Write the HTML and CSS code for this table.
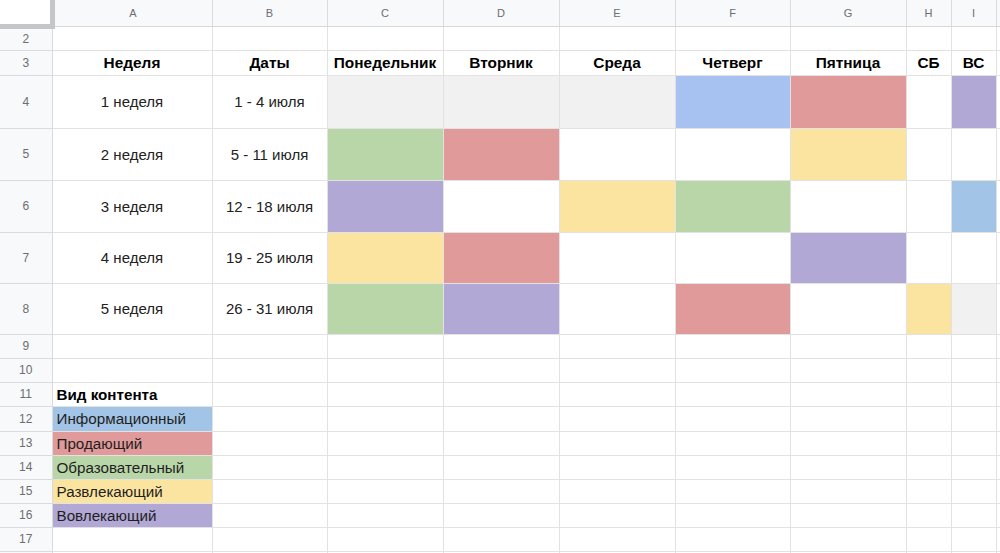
FILE: index.html
```html
<!DOCTYPE html>
<html lang="ru">
<head>
<meta charset="utf-8">
<title>Контент-план</title>
<link rel="stylesheet" href="styles.css">
</head>
<body>
<table class="sheet">
  <colgroup>
    <col class="w-rh"><col class="w-a"><col class="w-b"><col class="w-c"><col class="w-d"><col class="w-e"><col class="w-f"><col class="w-g"><col class="w-h"><col class="w-i"><col class="w-j">
  </colgroup>
  <tr class="r-head">
    <th class="corner"></th><th>A</th><th>B</th><th>C</th><th>D</th><th>E</th><th>F</th><th>G</th><th>H</th><th>I</th><th></th>
  </tr>
  <tr class="r-s24">
    <th class="rn">2</th><td></td><td></td><td></td><td></td><td></td><td></td><td></td><td></td><td></td><td></td>
  </tr>
  <tr class="r-s25">
    <th class="rn">3</th><td class="hd">Неделя</td><td class="hd">Даты</td><td class="hd">Понедельник</td><td class="hd">Вторник</td><td class="hd">Среда</td><td class="hd">Четверг</td><td class="hd">Пятница</td><td class="hd">СБ</td><td class="hd">ВС</td><td></td>
  </tr>
  <tr class="r-53">
    <th class="rn">4</th><td class="ctr">1 неделя</td><td class="ctr">1 - 4 июля</td><td class="c-grey"></td><td class="c-grey"></td><td class="c-grey"></td><td class="c-blue"></td><td class="c-red"></td><td></td><td class="c-purple"></td><td></td>
  </tr>
  <tr class="r-52">
    <th class="rn">5</th><td class="ctr">2 неделя</td><td class="ctr">5 - 11 июля</td><td class="c-green"></td><td class="c-red"></td><td></td><td></td><td class="c-yellow"></td><td></td><td></td><td></td>
  </tr>
  <tr class="r-52">
    <th class="rn">6</th><td class="ctr">3 неделя</td><td class="ctr">12 - 18 июля</td><td class="c-purple"></td><td></td><td class="c-yellow"></td><td class="c-green"></td><td></td><td></td><td class="c-lblue"></td><td></td>
  </tr>
  <tr class="r-51">
    <th class="rn">7</th><td class="ctr">4 неделя</td><td class="ctr">19 - 25 июля</td><td class="c-yellow"></td><td class="c-red"></td><td></td><td></td><td class="c-purple"></td><td></td><td></td><td></td>
  </tr>
  <tr class="r-51">
    <th class="rn">8</th><td class="ctr">5 неделя</td><td class="ctr">26 - 31 июля</td><td class="c-green"></td><td class="c-purple"></td><td></td><td class="c-red"></td><td></td><td class="c-yellow"></td><td class="c-grey"></td><td></td>
  </tr>
  <tr class="r-s24">
    <th class="rn">9</th><td></td><td></td><td></td><td></td><td></td><td></td><td></td><td></td><td></td><td></td>
  </tr>
  <tr class="r-s24">
    <th class="rn">10</th><td></td><td></td><td></td><td></td><td></td><td></td><td></td><td></td><td></td><td></td>
  </tr>
  <tr class="r-s24">
    <th class="rn">11</th><td class="lg-title">Вид контента</td><td></td><td></td><td></td><td></td><td></td><td></td><td></td><td></td><td></td>
  </tr>
  <tr class="r-s25">
    <th class="rn">12</th><td class="lg c-lblue">Информационный</td><td></td><td></td><td></td><td></td><td></td><td></td><td></td><td></td><td></td>
  </tr>
  <tr class="r-s24">
    <th class="rn">13</th><td class="lg c-red">Продающий</td><td></td><td></td><td></td><td></td><td></td><td></td><td></td><td></td><td></td>
  </tr>
  <tr class="r-s24">
    <th class="rn">14</th><td class="lg c-green">Образовательный</td><td></td><td></td><td></td><td></td><td></td><td></td><td></td><td></td><td></td>
  </tr>
  <tr class="r-s24">
    <th class="rn">15</th><td class="lg c-yellow">Развлекающий</td><td></td><td></td><td></td><td></td><td></td><td></td><td></td><td></td><td></td>
  </tr>
  <tr class="r-s24">
    <th class="rn">16</th><td class="lg c-purple">Вовлекающий</td><td></td><td></td><td></td><td></td><td></td><td></td><td></td><td></td><td></td>
  </tr>
  <tr class="r-s24">
    <th class="rn">17</th><td></td><td></td><td></td><td></td><td></td><td></td><td></td><td></td><td></td><td></td>
  </tr>
  <tr class="r-s24">
    <th class="rn"></th><td></td><td></td><td></td><td></td><td></td><td></td><td></td><td></td><td></td><td></td>
  </tr>
</table>
</body>
</html>
```

FILE: styles.css
```css
html, body {
  margin: 0;
  padding: 0;
  background: #ffffff;
  overflow: hidden;
}

body {
  width: 1000px;
  height: 553px;
  font-family: "Liberation Sans", Arial, sans-serif;
}

.sheet {
  table-layout: fixed;
  border-collapse: collapse;
  border-spacing: 0;
  width: 1010px;
}

.w-rh { width: 52px; }
.w-a { width: 160px; }
.w-b { width: 115px; }
.w-c { width: 116px; }
.w-d { width: 116px; }
.w-e { width: 116px; }
.w-f { width: 115px; }
.w-g { width: 116px; }
.w-h { width: 45px; }
.w-i { width: 45px; }
.w-j { width: 14px; }

.sheet td,
.sheet th {
  padding: 0;
  border: 1px solid #e2e2e2;
  overflow: hidden;
  white-space: nowrap;
  box-sizing: border-box;
}

.r-head { height: 26px; }
.r-s24 { height: 24px; }
.r-s25 { height: 25px; }
.r-53 { height: 53px; }
.r-52 { height: 52px; }
.r-51 { height: 51px; }

.r-head th {
  background: #f8f9fa;
  color: #6b6e72;
  font-weight: normal;
  font-size: 11px;
  text-align: center;
  border-color: #dadcdf;
  border-top: none;
  border-bottom: 1px solid #d6d8db;
}

.r-head th.corner {
  background: #ffffff;
  border-left: none;
  border-right: 5px solid #c4c6c9;
  border-bottom: 5px solid #c4c6c9;
}

.rn {
  background: #f8f9fa;
  color: #6b6e72;
  font-weight: normal;
  font-size: 12px;
  text-align: center;
  border-left: none !important;
  border-color: #d9dbde !important;
}

.hd {
  font-weight: bold;
  font-size: 15.4px;
  color: #000000;
  text-align: center;
}

.ctr {
  font-size: 15px;
  color: #222222;
  text-align: center;
}

.lg-title {
  font-weight: bold;
  font-size: 15.2px;
  color: #000000;
  padding-left: 4px !important;
}

.lg {
  font-size: 15.2px;
  color: #1f1f1f;
  padding-left: 4px !important;
}

.c-grey { background: #f1f1f1; }
.c-blue { background: #a7c1f0; }
.c-lblue { background: #a2c4e6; }
.c-red { background: #df9a99; }
.c-green { background: #b9d6a9; }
.c-yellow { background: #fbe49f; }
.c-purple { background: #b2a8d5; }
```
